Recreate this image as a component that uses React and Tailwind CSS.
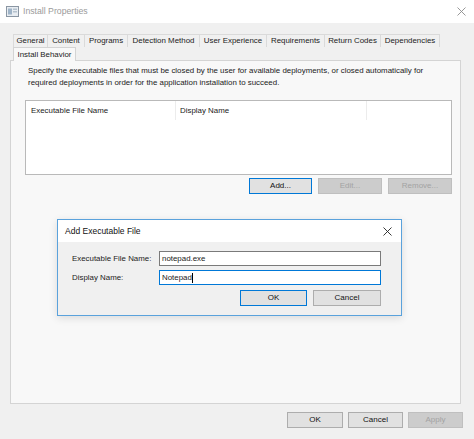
import React from 'react';

const FONT = { fontFamily: '"Liberation Sans", Arial, sans-serif' };

const TABS = [
  { label: 'General', w: 'w-[34px]' },
  { label: 'Content', w: 'w-[37px]' },
  { label: 'Programs', w: 'w-[43px]' },
  { label: 'Detection Method', w: 'w-[72px]' },
  { label: 'User Experience', w: 'w-[67px]' },
  { label: 'Requirements', w: 'w-[58px]' },
  { label: 'Return Codes', w: 'w-[56px]' },
  { label: 'Dependencies', w: 'w-[60px]' },
];

function Btn({ children, w, primary, disabled }) {
  const tone = disabled
    ? 'bg-[#cccccc] border-[#bfbfbf] text-[#a3a3a3]'
    : primary
    ? 'bg-[#e1e1e1] border-[#0078d7] text-[#111]'
    : 'bg-[#e1e1e1] border-[#adadad] text-[#111]';
  return (
    <div className={`${w} h-[16px] border flex items-center justify-center text-[8px] ${tone}`}>
      {children}
    </div>
  );
}

function Close({ className }) {
  return (
    <svg width="9" height="9" viewBox="0 0 9 9" className={className}>
      <path d="M0.5 0.5 L8.5 8.5 M8.5 0.5 L0.5 8.5" stroke="currentColor" strokeWidth="0.9" fill="none" />
    </svg>
  );
}

export default function App() {
  return (
    <div className="relative w-[474px] h-[439px] bg-[#f0f0f0] overflow-hidden text-[#222]" style={FONT}>
      {/* main window title bar (inactive) */}
      <div className="h-[23px] bg-white flex items-center pl-[6px] pr-[8px]">
        <svg width="13" height="11" viewBox="0 0 13 11" className="mr-[4px]">
          <rect x="0.5" y="0.5" width="12" height="10" fill="#e8edf2" stroke="#8a96a3" />
          <rect x="2" y="2.5" width="4" height="6" fill="#9fb4c8" />
          <rect x="7" y="2.5" width="4" height="1.5" fill="#b5c2ce" />
          <rect x="7" y="5" width="4" height="1.5" fill="#b5c2ce" />
        </svg>
        <span className="text-[8.7px] text-[#9a9a9a]">Install Properties</span>
        <Close className="ml-auto text-[#8c8c8c]" />
      </div>

      {/* tab strip */}
      <div className="mt-[11px] ml-[13px] flex flex-col text-[7.9px]">
        <div className="flex">
          {TABS.map((t) => (
            <div
              key={t.label}
              className={`${t.w} h-[13px] border-t border-l border-[#dadada] last:border-r flex items-center justify-center whitespace-nowrap bg-[#f0f0f0]`}
            >
              {t.label}
            </div>
          ))}
        </div>
        <div className="w-[63px] h-[14px] -mb-px relative z-10 border border-b-0 border-[#d4d4d4] bg-[#f8f8f8] flex items-center justify-center whitespace-nowrap">
          Install Behavior
        </div>
      </div>

      {/* tab page */}
      <div className="ml-[10px] w-[451px] h-[344px] border border-[#d4d4d4] bg-[#f8f8f8] flex flex-col pl-[14px] pr-[8px] pt-[4px]">
        <p className="text-[7.9px] leading-[12px] pl-[3px]">
          Specify the executable files that must be closed by the user for available deployments, or closed automatically for
          <br />
          required deployments in order for the application installation to succeed.
        </p>
        <div className="mt-[11px] w-[427px] h-[75px] border border-[#b9b9b9] bg-white">
          <div className="flex h-[19px] items-center text-[7.9px]">
            <div className="w-[150px] h-full pl-[5px] flex items-center border-r border-[#ececec]">Executable File Name</div>
            <div className="w-[191px] h-full pl-[4px] flex items-center border-r border-[#ececec]">Display Name</div>
          </div>
        </div>
        <div className="mt-[3px] w-[427px] flex justify-end gap-[6px]">
          <Btn w="w-[63px]" primary>Add...</Btn>
          <Btn w="w-[64px]" disabled>Edit...</Btn>
          <Btn w="w-[64px]" disabled>Remove...</Btn>
        </div>
      </div>

      {/* dialog buttons */}
      <div className="mt-[8px] mr-[11px] flex justify-end gap-[5px]">
        <Btn w="w-[56px]">OK</Btn>
        <Btn w="w-[55px]">Cancel</Btn>
        <Btn w="w-[55px]" disabled>Apply</Btn>
      </div>

      {/* Add Executable File modal window */}
      <div className="absolute left-[57px] top-[219px] w-[345px] h-[97px] border border-[#5aa2dc] bg-[#f0f0f0] flex flex-col shadow-[0_2px_8px_rgba(0,0,0,0.12)]">
        <div className="h-[22px] bg-white flex items-center pl-[7px] pr-[9px]">
          <span className="text-[8.5px] text-[#111]">Add Executable File</span>
          <Close className="ml-auto text-[#222]" />
        </div>
        <div className="flex flex-col pl-[14px] pt-[9px] text-[7.9px]">
          <div className="flex items-center h-[15px]">
            <span className="w-[87px]">Executable File Name:</span>
            <div className="w-[222px] h-[15px] border border-[#7a7a7a] bg-white flex items-center pl-[2px]">notepad.exe</div>
          </div>
          <div className="flex items-center h-[15px] mt-[4px]">
            <span className="w-[87px]">Display Name:</span>
            <div className="w-[222px] h-[15px] border border-[#0078d7] bg-white flex items-center pl-[2px]">
              Notepad<span className="inline-block w-px h-[10px] bg-black" />
            </div>
          </div>
          <div className="flex justify-end gap-[6px] mt-[5px] mr-[20px]">
            <Btn w="w-[67px]" primary>OK</Btn>
            <Btn w="w-[68px]">Cancel</Btn>
          </div>
        </div>
      </div>
    </div>
  );
}
